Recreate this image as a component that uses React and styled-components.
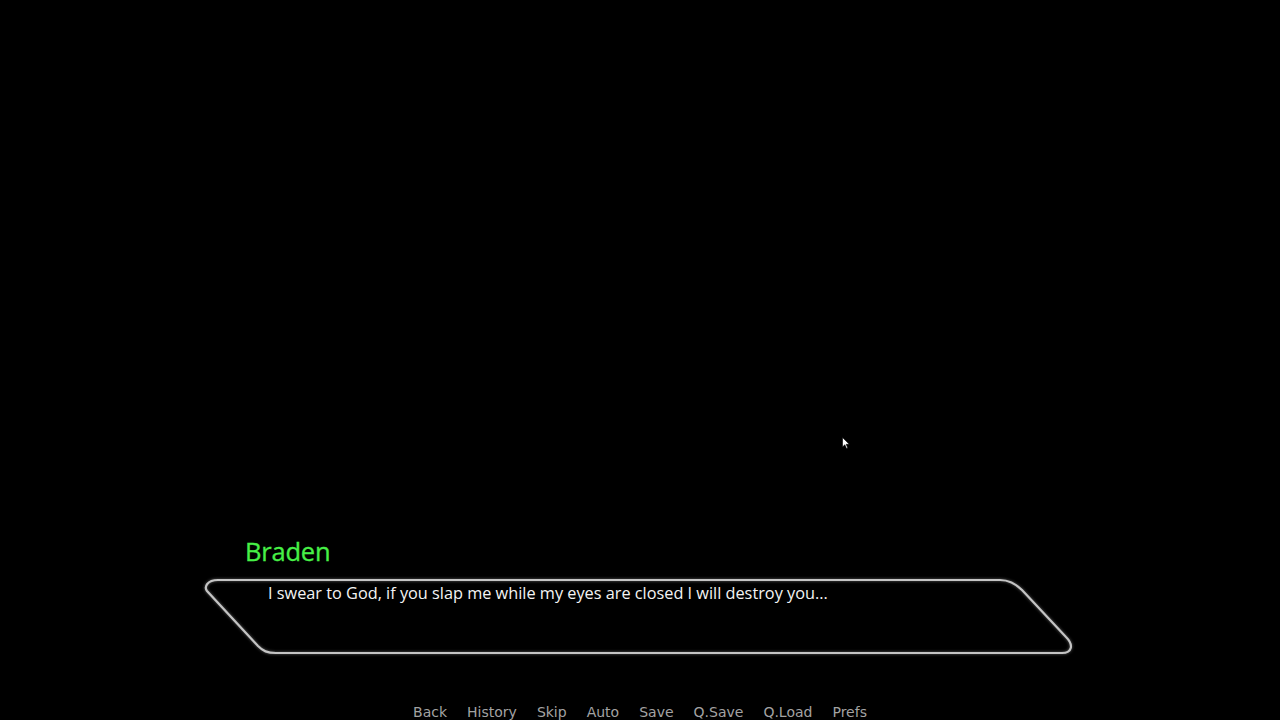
import React from "react";
import styled, { createGlobalStyle } from "styled-components";

const Global = createGlobalStyle`
  html, body { margin: 0; padding: 0; background: #000; }
  body { width: 1280px; height: 720px; overflow: hidden; }
`;

const Stage = styled.div`
  position: relative;
  width: 1280px;
  height: 720px;
  background: #000;
  display: flex;
  flex-direction: column;
  align-items: center;
  justify-content: flex-end;
`;

const DialogueWindow = styled.div`
  width: 868px;
  margin-left: -4px;
  display: flex;
  flex-direction: column;
`;

const NameLabel = styled.div`
  margin-left: 41px;
  font-family: "Open Sans", "Noto Sans", sans-serif;
  font-size: 25.5px;
  line-height: 34px;
  color: #47f047;
  letter-spacing: -0.2px;
  height: 44px;
  -webkit-text-stroke: 0.3px #47f047;
`;

const TextBox = styled.div`
  position: relative;
  height: 78px;
  padding: 4px 0 0 64px;
  box-sizing: border-box;
`;

const Frame = styled.svg`
  position: absolute;
  left: 0;
  top: 0;
  width: 868px;
  height: 78px;
  overflow: visible;
  filter: drop-shadow(0 0 1.5px rgba(200, 200, 200, 0.5));
`;

const Line = styled.p`
  position: relative;
  margin: 0;
  font-family: "Open Sans", "Noto Sans", sans-serif;
  font-size: 16.3px;
  line-height: 22px;
  color: #f4f4f4;
`;

const QuickMenu = styled.nav`
  display: flex;
  gap: 20px;
  margin-top: 42px;
  height: 22px;
  align-items: flex-end;
`;

const QuickButton = styled.span`
  font-family: "DejaVu Sans", sans-serif;
  font-size: 14px;
  line-height: 17px;
  color: #a3a3a3;
  margin-bottom: -1px;
`;

const Cursor = styled.svg`
  position: absolute;
  left: 842px;
  top: 437px;
  width: 8px;
  height: 13px;
`;

const items = ["Back", "History", "Skip", "Auto", "Save", "Q.Save", "Q.Load", "Prefs"];

export default function App() {
  return (
    <Stage>
      <Global />
      <DialogueWindow>
        <NameLabel>Braden</NameLabel>
        <TextBox>
          <Frame viewBox="0 0 868 78">
            <path
              d="M 14 2 L 796 2 C 806 2 812 6 818 12 L 862 59 C 870 67 868 75 858 75 L 72 75 C 63 75 59 73 54 68 L 3 13 C 0 9 3 2 14 2 Z"
              fill="none"
              stroke="#c4c4c4"
              strokeWidth="2.2"
            />
          </Frame>
          <Line>I swear to God, if you slap me while my eyes are closed I will destroy you...</Line>
        </TextBox>
      </DialogueWindow>
      <QuickMenu>
        {items.map((t) => (
          <QuickButton key={t}>{t}</QuickButton>
        ))}
      </QuickMenu>
      <Cursor viewBox="0 0 8 13">
        <path d="M0.5 0.5 L0.5 10 L2.8 7.8 L4.5 11.5 L5.8 11 L4.2 7.3 L7.3 7.3 Z" fill="#fff" stroke="#000" strokeWidth="0.6" />
      </Cursor>
    </Stage>
  );
}
